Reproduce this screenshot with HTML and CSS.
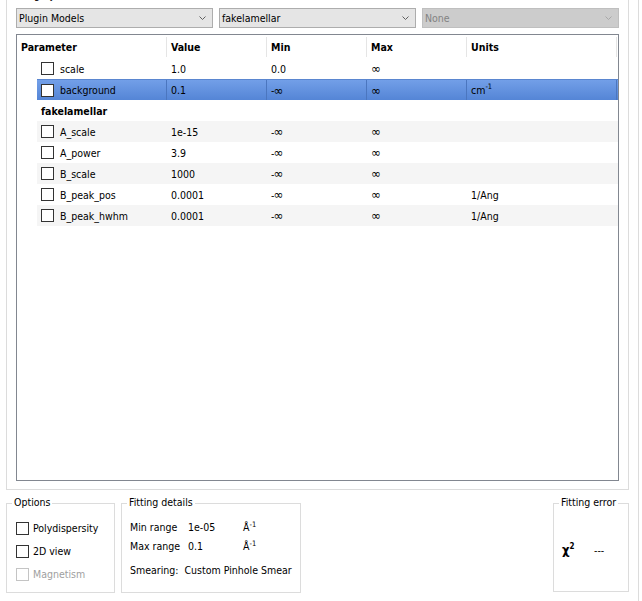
FILE: index.html
```html
<!DOCTYPE html>
<html>
<head>
<meta charset="utf-8">
<link rel="stylesheet" href="styles.css">
</head>
<body>
<div class="window">
  <div class="main">
    <div class="group category">
      <span class="gtitle cat-title">Category</span>
      <div class="combos">
        <div class="combo"><span>Plugin Models</span><svg class="chev" width="7" height="4" viewBox="0 0 7 4"><polyline points="0.5,0.5 3.5,3.5 6.5,0.5" fill="none" stroke="#606060" stroke-width="1"/></svg></div>
        <div class="combo"><span>fakelamellar</span><svg class="chev" width="7" height="4" viewBox="0 0 7 4"><polyline points="0.5,0.5 3.5,3.5 6.5,0.5" fill="none" stroke="#606060" stroke-width="1"/></svg></div>
        <div class="combo disabled"><span>None</span><svg class="chev" width="7" height="4" viewBox="0 0 7 4"><polyline points="0.5,0.5 3.5,3.5 6.5,0.5" fill="none" stroke="#a8a8a8" stroke-width="1"/></svg></div>
      </div>
      <div class="table">
        <div class="thead">
          <div class="th c1">Parameter</div>
          <div class="th c">Value</div>
          <div class="th c">Min</div>
          <div class="th c">Max</div>
          <div class="th clast">Units</div>
        </div>
        <div class="row child">
          <div class="td c1"><span class="cb"></span>scale</div>
          <div class="td c">1.0</div>
          <div class="td c">0.0</div>
          <div class="td c"><span class="inf">∞</span></div>
          <div class="td clast"></div>
        </div>
        <div class="row child selected">
          <div class="td c1"><span class="cb"></span>background</div>
          <div class="td c">0.1</div>
          <div class="td c">-<span class="inf tight">∞</span></div>
          <div class="td c"><span class="inf">∞</span></div>
          <div class="td clast">cm<span class="sup">-1</span></div>
        </div>
        <div class="row parent">
          <div class="td c1">fakelamellar</div>
        </div>
        <div class="row child alt">
          <div class="td c1"><span class="cb"></span>A_scale</div>
          <div class="td c">1e-15</div>
          <div class="td c">-<span class="inf tight">∞</span></div>
          <div class="td c"><span class="inf">∞</span></div>
          <div class="td clast"></div>
        </div>
        <div class="row child">
          <div class="td c1"><span class="cb"></span>A_power</div>
          <div class="td c">3.9</div>
          <div class="td c">-<span class="inf tight">∞</span></div>
          <div class="td c"><span class="inf">∞</span></div>
          <div class="td clast"></div>
        </div>
        <div class="row child alt">
          <div class="td c1"><span class="cb"></span>B_scale</div>
          <div class="td c">1000</div>
          <div class="td c">-<span class="inf tight">∞</span></div>
          <div class="td c"><span class="inf">∞</span></div>
          <div class="td clast"></div>
        </div>
        <div class="row child">
          <div class="td c1"><span class="cb"></span>B_peak_pos</div>
          <div class="td c">0.0001</div>
          <div class="td c">-<span class="inf tight">∞</span></div>
          <div class="td c"><span class="inf">∞</span></div>
          <div class="td clast">1/Ang</div>
        </div>
        <div class="row child alt">
          <div class="td c1"><span class="cb"></span>B_peak_hwhm</div>
          <div class="td c">0.0001</div>
          <div class="td c">-<span class="inf tight">∞</span></div>
          <div class="td c"><span class="inf">∞</span></div>
          <div class="td clast">1/Ang</div>
        </div>
      </div>
    </div>

    <div class="bottom">
      <div class="group options">
        <span class="gtitle">Options</span>
        <div class="opt-list">
          <div class="opt"><span class="cb"></span>Polydispersity</div>
          <div class="opt"><span class="cb"></span>2D view</div>
          <div class="opt disabled"><span class="cb"></span>Magnetism</div>
        </div>
      </div>
      <div class="group details">
        <span class="gtitle">Fitting details</span>
        <div class="det-grid">
          <span>Min range</span><span>1e-05</span><span>Å<span class="sup">-1</span></span>
          <span>Max range</span><span>0.1</span><span>Å<span class="sup">-1</span></span>
        </div>
        <div class="smear">Smearing:&nbsp; Custom Pinhole Smear</div>
      </div>
      <div class="spacer"></div>
      <div class="group error">
        <span class="gtitle">Fitting error</span>
        <div class="chi-row">
          <span class="chi">χ<span class="sup2">2</span></span>
          <span class="dash">---</span>
        </div>
      </div>
    </div>
  </div>
  <div class="vline"></div>
</div>
</body>
</html>
```

FILE: styles.css
```css
html, body {
  margin: 0;
  padding: 0;
  background: #ffffff;
}
body {
  font-family: "DejaVu Sans Condensed", "DejaVu Sans", sans-serif;
  font-size: 10.5px;
  color: #000;
  width: 642px;
  height: 601px;
  overflow: hidden;
}
.window {
  display: flex;
  height: 601px;
}
.main {
  width: 623px;
  padding-left: 6px;
  display: flex;
  flex-direction: column;
}
.vline {
  margin-left: 9px;
  width: 1px;
  background: #dcdcdc;
}
.group {
  position: relative;
  border: 1px solid #dcdcdc;
  box-sizing: border-box;
}
.gtitle {
  position: absolute;
  left: 5px;
  top: -8px;
  padding: 0 2px;
  background: #fff;
  line-height: 13px;
  white-space: nowrap;
}
.category {
  margin-top: -5px;
  width: 623px;
  padding: 12px 9px 8px 9px;
}
.cat-title {
  top: -7px;
  left: 3px;
}
.combos {
  display: flex;
  gap: 6px;
  height: 20px;
}
.combo {
  width: 197px;
  height: 20px;
  box-sizing: border-box;
  border: 1px solid #adadad;
  background: #e5e5e5;
  display: flex;
  align-items: center;
  justify-content: space-between;
  padding: 0 6px 0 2px;
}
.combo.disabled {
  background: #cccccc;
  border-color: #bfbfbf;
  color: #838383;
}
.chev {
  display: block;
}
.table {
  margin-top: 6px;
  height: 447px;
  box-sizing: border-box;
  border: 1px solid #828790;
  background: #fff;
}
.thead {
  display: flex;
  height: 23px;
}
.th {
  font-weight: bold;
  box-sizing: border-box;
  padding-left: 4px;
  border-right: 1px solid #e5e5e5;
  height: 20px;
  margin-top: 2px;
  display: flex;
  align-items: center;
}
.c1 { width: 150px; }
.c { width: 100px; }
.clast { width: 150px; }
.row {
  display: flex;
  height: 21px;
  align-items: stretch;
}
.td {
  box-sizing: border-box;
  padding-left: 4px;
  border-right: 1px solid transparent;
  display: flex;
  align-items: center;
  white-space: nowrap;
}
.inf {
  font-size: 13px;
  line-height: 1;
}
.inf.tight {
  margin-left: -1px;
}
.row.child {
  margin-left: 20px;
}
.row.child .c1 {
  width: 130px;
  padding-left: 4px;
}
.row.parent .c1 {
  font-weight: bold;
  padding-left: 24px;
  width: 300px;
}
.row.alt {
  background: #f5f5f5;
}
.row.selected {
  background: linear-gradient(#729fe8, #5485d6);
  border-top: 1px solid #5a86d0;
  box-sizing: border-box;
}
.row.selected .td {
  border-right-color: #4b76bf;
}
.row.selected .cb {
  background: #fff;
}
.cb {
  display: inline-block;
  width: 13px;
  height: 13px;
  box-sizing: border-box;
  border: 1px solid #333333;
  background: #fff;
  margin-right: 6px;
  flex: none;
}
.sup {
  font-size: 7.5px;
  position: relative;
  top: -4px;
}
.bottom {
  display: flex;
  margin-top: 13px;
  height: 90px;
}
.options {
  width: 109px;
  height: 90px;
}
.opt-list {
  display: flex;
  flex-direction: column;
  gap: 10px;
  padding: 18px 0 0 9px;
}
.opt {
  display: flex;
  align-items: center;
  height: 13px;
  line-height: 13px;
}
.opt .cb {
  margin-right: 4px;
}
.opt.disabled {
  color: #a0a0a0;
}
.opt.disabled .cb {
  border-color: #c4c4c4;
}
.details {
  margin-left: 6px;
  width: 180px;
  height: 90px;
  padding: 13px 0 0 8px;
}
.det-grid {
  display: grid;
  grid-template-columns: 58px 55px auto;
  grid-auto-rows: 19px;
  align-items: center;
}
.smear {
  margin-top: 6px;
  line-height: 19px;
}
.spacer {
  flex: 1;
}
.error {
  width: 76px;
  height: 89px;
  padding: 38px 0 0 8px;
}
.chi-row {
  display: flex;
  align-items: center;
}
.chi {
  font-weight: bold;
  font-size: 13px;
  width: 32px;
}
.sup2 {
  font-size: 8px;
  position: relative;
  top: -5px;
}
```
